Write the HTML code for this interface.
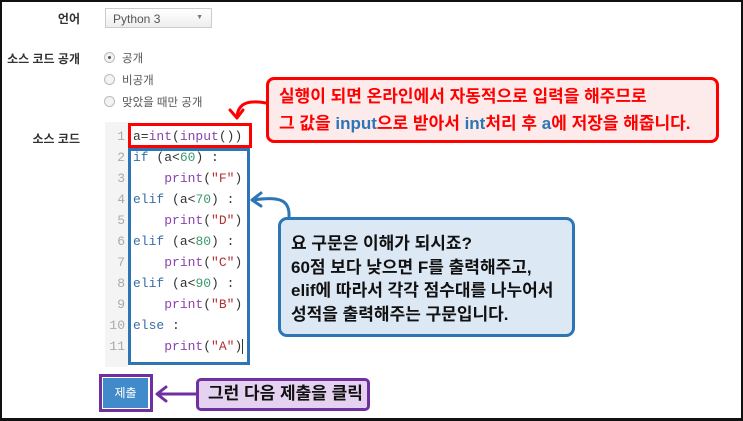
<!DOCTYPE html>
<html><head><meta charset="utf-8"><style>
*{margin:0;padding:0;box-sizing:border-box}
body{width:743px;height:421px;position:relative;overflow:hidden;background:#fff;font-family:"Liberation Sans","Noto Sans CJK KR",sans-serif}
.a{position:absolute}
.lbl{font-size:12px;font-weight:bold;color:#333;text-align:right;width:80px;left:0}
.rad{font-size:11.5px;color:#555;left:104px}
.rad i{display:inline-block;width:11px;height:11px;border:1px solid #bbb;border-radius:50%;background:#f3f3f3;vertical-align:-1px;margin-right:7px;position:relative}
.rad i.on:after{content:"";position:absolute;left:3px;top:3px;width:3px;height:3px;border-radius:50%;background:#555}
.code{font-family:"Liberation Mono",monospace;font-size:13px;line-height:21px}
.ln{color:#aaa;text-align:right;width:20px;left:105px}
.kw{color:#3a6ea5}.fn{color:#8a44b0}.nm{color:#3a9a6a}.st{color:#b03030}
.t{font-weight:bold;font-size:17px;line-height:23.5px}
</style></head><body>
<div class="a" style="left:0;top:0;width:743px;height:421px;border:2px solid #111;border-bottom-width:3px;z-index:9;pointer-events:none"></div>
<div class="a lbl" style="top:10px">언어</div>
<div class="a" style="left:105px;top:8px;width:107px;height:20px;border:1px solid #ccc;background:linear-gradient(#fff,#eee);font-size:12px;color:#555;padding:3px 0 0 7px">Python 3<span style="position:absolute;right:8px;top:5px;font-size:7px;color:#777">▼</span></div>
<div class="a lbl" style="top:50px">소스 코드 공개</div>
<div class="a rad" style="top:50px"><i class="on"></i>공개</div>
<div class="a rad" style="top:72px"><i></i>비공개</div>
<div class="a rad" style="top:94px"><i></i>맞았을 때만 공개</div>
<div class="a lbl" style="top:130px">소스 코드</div>
<div class="a" style="left:105px;top:122px;width:23px;height:245px;background:#f4f4f4"></div>
<div class="a" style="left:128px;top:122px;width:125px;height:245px;background:#fff"></div>
<div class="a code ln" style="top:126px">1<br>2<br>3<br>4<br>5<br>6<br>7<br>8<br>9<br>10<br>11</div>
<div class="a code" style="left:133px;top:126px;white-space:pre;color:#333">a=<span class="fn">int</span>(<span class="fn">input</span>())
<span class="kw">if</span> (a&lt;<span class="nm">60</span>) :
    <span class="fn">print</span>(<span class="st">"F"</span>)
<span class="kw">elif</span> (a&lt;<span class="nm">70</span>) :
    <span class="fn">print</span>(<span class="st">"D"</span>)
<span class="kw">elif</span> (a&lt;<span class="nm">80</span>) :
    <span class="fn">print</span>(<span class="st">"C"</span>)
<span class="kw">elif</span> (a&lt;<span class="nm">90</span>) :
    <span class="fn">print</span>(<span class="st">"B"</span>)
<span class="kw">else</span> :
    <span class="fn">print</span>(<span class="st">"A"</span>)<span style="border-left:1px solid #333"></span></div>
<div class="a" style="left:128px;top:123px;width:124px;height:25px;border:3px solid #f00"></div>
<div class="a" style="left:128px;top:148px;width:122px;height:217px;border:3px solid #2e75b6"></div>
<div class="a" style="left:103px;top:378px;width:45px;height:30px;background:#428bca;color:#fff;font-size:12px;text-align:center;line-height:30px">제출</div>
<div class="a" style="left:99px;top:374px;width:54px;height:38px;border:3px solid #7030a0"></div>
<div class="a" style="left:266px;top:77px;width:453px;height:66px;border:3px solid #f00;border-radius:8px;background:#fdeaea"></div>
<div class="a t" style="left:279px;top:83px;color:#f00;line-height:27px">실행이 되면 온라인에서 자동적으로 입력을 해주므로<br>그 값을 <span style="color:#2e75b6">input</span>으로 받아서 <span style="color:#2e75b6">int</span>처리 후 <span style="color:#2e75b6">a</span>에 저장을 해줍니다.</div>
<div class="a" style="left:278px;top:217px;width:297px;height:120px;border:3px solid #2e75b6;border-radius:9px;background:#dde8f5"></div>
<div class="a t" style="left:291px;top:232px;color:#111">요 구문은 이해가 되시죠?<br>60점 보다 낮으면 F를 출력해주고,<br>elif에 따라서 각각 점수대를 나누어서<br>성적을 출력해주는 구문입니다.</div>
<div class="a" style="left:196px;top:378px;width:174px;height:33px;border:3px solid #7030a0;border-radius:5px;background:#e4d2f0"></div>
<div class="a t" style="left:208px;top:382px;color:#111;font-size:17px">그런 다음 제출을 클릭</div>
<svg class="a" style="left:0;top:0" width="743" height="421" fill="none" stroke-width="3" stroke-linecap="round" stroke-linejoin="round">
<path d="M266 103 C250 100 238 102 237 117" stroke="#f00"/><path d="M230 110 L237 118 L243 110" stroke="#f00"/>
<path d="M289 217 C290 200 280 196 253 200" stroke="#2e75b6"/><path d="M261 193 L252 200 L261 206" stroke="#2e75b6"/>
<path d="M196 394 L158 394" stroke="#7030a0"/><path d="M166 387 L157 394 L166 401" stroke="#7030a0"/>
</svg>
</body></html>
